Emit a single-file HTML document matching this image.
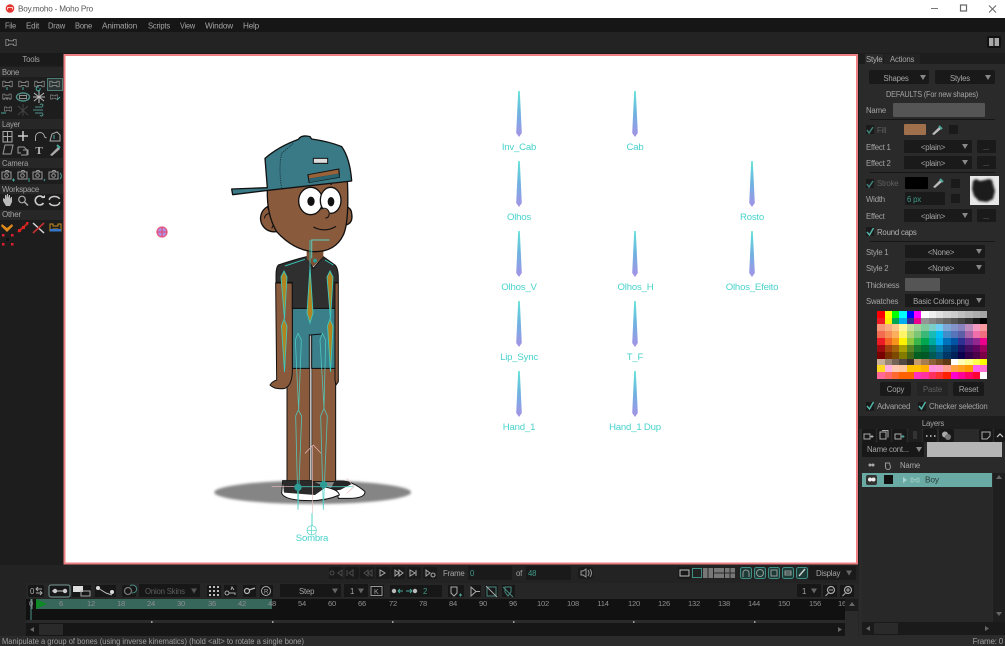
<!DOCTYPE html>
<html><head><meta charset="utf-8"><title>Boy.moho - Moho Pro</title>
<style>
html,body{margin:0;padding:0;width:1005px;height:646px;overflow:hidden;background:#262626}
svg{position:absolute;left:0;top:0}
text{font-family:"Liberation Sans",sans-serif;font-size:7.8px;letter-spacing:-.2px;fill:#a4a4a4}
.t{fill:#48d2cc;font-size:9.6px;text-anchor:middle}
.m{text-anchor:middle}
.g{fill:#5f5f5f}
.tl{fill:#3f9a88}
.r{fill:#8f8f8f;font-size:7.6px;text-anchor:middle}
.i{fill:none;stroke:#9a9a9a;stroke-width:1}
.c{fill:none;stroke:#52b5a8;stroke-width:1.5}
.tb{fill:none;stroke:#3f8f85;stroke-width:1}
#sw{position:absolute;left:877.3px;top:310.7px;width:110px;height:68.5px;display:grid;grid-template-columns:repeat(15,1fr);grid-template-rows:repeat(10,1fr)}
#sw i{display:block}
</style></head><body>
<svg width="1005" height="646" viewBox="0 0 1005 646" xmlns="http://www.w3.org/2000/svg">
<defs>
<linearGradient id="bn" x1="0" y1="0" x2="0" y2="1"><stop offset="0" stop-color="#62e2d8"/><stop offset=".45" stop-color="#6cb4e0"/><stop offset="1" stop-color="#a592e6"/></linearGradient>
<symbol id="bone" viewBox="0 0 10 50" overflow="visible"><path d="M4.200 0H5.800L7.800 42L5 46L2.200 42Z" fill="url(#bn)"/></symbol>
<symbol id="db" viewBox="0 0 14 10" overflow="visible"><path d="M1 1.500h3v1.500h6V1.500h3v7h-3V7H4v1.500H1Z" fill="none" stroke="#8f8f8f"/></symbol>
<filter id="bl"><feGaussianBlur stdDeviation="1"/></filter>
<filter id="bl2" x="-10%" y="-30%" width="120%" height="160%"><feGaussianBlur stdDeviation="4"/></filter>
</defs>

<!-- title bar -->
<rect width="1005" height="18" fill="#fff"/>
<circle cx="10" cy="8.500" r="4.300" fill="#e3342f"/><path d="M7.600 9.500v-2h4.800v2" fill="none" stroke="#fff" stroke-width=".8"/>
<text x="18" y="11.500" style="fill:#555;font-size:8.300px" textLength="75" lengthAdjust="spacingAndGlyphs">Boy.moho - Moho Pro</text>
<path d="M931 8.500h7" stroke="#777" fill="none"/><rect x="960.500" y="5" width="6" height="6" fill="none" stroke="#666" stroke-width="1.200"/><path d="M989 5.500l7 7M996 5.500l-7 7" stroke="#666" fill="none"/>

<!-- menu -->
<rect y="18" width="1005" height="14" fill="#161616"/>
<g style="font-size:8.400px"><text x="5" y="28.500" style="font-size:8.400px" textLength="11" lengthAdjust="spacingAndGlyphs">File</text><text x="26" y="28.500" style="font-size:8.400px" textLength="13" lengthAdjust="spacingAndGlyphs">Edit</text><text x="48" y="28.500" style="font-size:8.400px" textLength="17" lengthAdjust="spacingAndGlyphs">Draw</text><text x="75" y="28.500" style="font-size:8.400px" textLength="17" lengthAdjust="spacingAndGlyphs">Bone</text><text x="102" y="28.500" style="font-size:8.400px" textLength="35" lengthAdjust="spacingAndGlyphs">Animation</text><text x="148" y="28.500" style="font-size:8.400px" textLength="22" lengthAdjust="spacingAndGlyphs">Scripts</text><text x="180" y="28.500" style="font-size:8.400px" textLength="15" lengthAdjust="spacingAndGlyphs">View</text><text x="205" y="28.500" style="font-size:8.400px" textLength="28" lengthAdjust="spacingAndGlyphs">Window</text><text x="243" y="28.500" style="font-size:8.400px" textLength="16" lengthAdjust="spacingAndGlyphs">Help</text></g>

<!-- toolbar -->
<rect y="32" width="1005" height="21" fill="#232323"/>
<use href="#db" x="5" y="38" width="12" height="9"/>
<rect x="987" y="36" width="14" height="12" rx="2" fill="#111"/><path d="M989 38h4.400v8H989ZM994.600 38h4.400v8h-4.400Z" fill="#a8a8a8"/>

<!-- tool panel -->
<rect y="53" width="64" height="512" fill="#1d1d1d"/>
<rect y="53" width="63" height="12" fill="#1a1a1a"/><text x="31" y="62" class="m">Tools</text>
<g fill="#272727"><rect y="67" width="63" height="10"/><rect y="119" width="63" height="10"/><rect y="158" width="63" height="10"/><rect y="184" width="63" height="10"/><rect y="210" width="63" height="10"/></g>
<text x="2" y="75" style="font-size:8.400px" textLength="17" lengthAdjust="spacingAndGlyphs">Bone</text><text x="2" y="127" style="font-size:8.400px" textLength="18" lengthAdjust="spacingAndGlyphs">Layer</text><text x="2" y="166" style="font-size:8.400px" textLength="26" lengthAdjust="spacingAndGlyphs">Camera</text><text x="2" y="192" style="font-size:8.400px" textLength="37" lengthAdjust="spacingAndGlyphs">Workspace</text><text x="2" y="217" style="font-size:8.400px" textLength="19" lengthAdjust="spacingAndGlyphs">Other</text>
<rect x="47.500" y="78.500" width="15" height="12" fill="#2a3533" stroke="#4d7c74"/>
<g>
<use href="#db" x="2" y="80" width="11" height="8"/><use href="#db" x="18" y="80" width="11" height="8"/><use href="#db" x="34" y="80" width="11" height="8"/><use href="#db" x="49" y="80" width="11" height="8"/>
<path d="M7 87v3M23 87v3M39 87a2 2 0 1 0 1 1" stroke="#48a89c" fill="none"/>
<use href="#db" x="2" y="93" width="10" height="7"/><path d="M3 99h8" stroke="#999" stroke-dasharray="2 1"/>
<ellipse cx="23" cy="97" rx="6.500" ry="4" fill="none" stroke="#4d8f86" stroke-width="1.400"/><rect x="19.500" y="95.500" width="7" height="3" fill="none" stroke="#aaa" stroke-width=".8"/>
<path d="M39 91v12M34 93l10 8M44 93l-10 8M33 97h12" stroke="#bbb" fill="none"/>
<use href="#db" x="49" y="94" width="10" height="6"/><path d="M57 100l3-3" stroke="#48a89c" fill="none"/>
<use href="#db" x="3" y="106" width="10" height="6"/><path d="M1 113h5" stroke="#48a89c"/>
<path d="M18 106l10 9M28 106l-10 9M23 104v12" stroke="#444" fill="none"/>
<path d="M35 107h6a1.500 1.500 0 1 0-1-2M33 110h10M35 113h6a1.500 1.500 0 1 1-1 2" stroke="#4d8f86" fill="none"/>
</g>
<g class="i">
<path d="M3 131.500h9v10.500H3ZM7.500 131.500V142M3 136.500h9" stroke="#aaa"/><path d="M18 136h10M23 131v10" stroke="#ccc" stroke-width="1.500"/><path d="M35.500 141v-4a4.500 4.500 0 0 1 9 0l2 1" stroke="#aaa"/><path d="M50 141l2-7 5-2 3 3v6Z" stroke="#aaa"/><path d="M54 139v-4" stroke="#48a89c"/>
<path d="M3 154l2-9h8l-2 9Z"/><path d="M18 147h6l3 3v5h-6M18 147v6h3" /><path d="M23 150h5v5"/>
</g>
<text x="39" y="154" class="m" style="font-family:'Liberation Serif',serif;font-weight:bold;font-size:11px;fill:#bbb">T</text>
<path d="M50 155l8-8 2 2-8 7Z" fill="#aaa"/><path d="M57 145l3 3" stroke="#48a89c" stroke-width="2"/>
<g class="i">
<path d="M2 172h9v7H2ZM5 172l1-1.500h2l1 1.500"/><circle cx="6.500" cy="175.500" r="1.800"/><path d="M18 172h9v7h-9ZM21 172l1-1.500h2l1 1.500"/><circle cx="22.500" cy="175.500" r="1.800"/><path d="M33 172h9v7h-9ZM36 172l1-1.500h2l1 1.500"/><circle cx="37.500" cy="175.500" r="1.800"/><path d="M49 172h9v7h-9ZM52 172l1-1.500h2l1 1.500"/><circle cx="53.500" cy="175.500" r="1.800"/>
</g>
<path d="M12 180h3M13.500 178.500v3M29 178v4M44 181l1-2M60 173a4 4 0 0 1 0 6" stroke="#48a89c" fill="none"/>
<path d="M3 201v-3l2 1v-4h1v3l1-4h1v4l1-3h1v4l1-2h1v5l-2 4H6Z" fill="#bbb"/>
<circle cx="22" cy="199.500" r="3.300" fill="none" stroke="#aaa" stroke-width="1.200"/><path d="M24.500 202l3.500 3.500" stroke="#aaa" stroke-width="1.500"/>
<path d="M43.500 198a4.500 4.500 0 1 0 0 5" fill="none" stroke="#ccc" stroke-width="1.600"/><path d="M41 198h4v-3" fill="#ccc"/>
<path d="M49.500 200a5 3 0 0 1 10-1M59.500 202a5 3 0 0 1-10 1" fill="none" stroke="#ccc" stroke-width="1.500"/>
<path d="M2 224l5 4 5-4 1 2-6 6-6-6Z" fill="#e08a1c"/>
<path d="M18 232l10-9" stroke="#b03020" stroke-width="2"/><rect x="18" y="229" width="3" height="3" fill="#e02020"/><rect x="22" y="226" width="3" height="3" fill="#e02020"/><rect x="26" y="222" width="2.500" height="2.500" fill="#e02020"/>
<path d="M33 223l11 10" stroke="#d8d8d8" stroke-width="1.500"/><path d="M44 223l-11 10" stroke="#c03030" stroke-width="1.800"/>
<path d="M50 224h3v2h5v-2h3v7h-3v-2h-5v2h-3Z" fill="none" stroke="#c89020"/><rect x="50" y="229" width="11" height="2.500" fill="#3377cc"/>
<g fill="#e02030"><rect x="2" y="234" width="2.500" height="2.500"/><rect x="11" y="234" width="2.500" height="2.500"/><rect x="2" y="243" width="2.500" height="2.500"/><rect x="11" y="243" width="2.500" height="2.500"/></g><rect x="6" y="238" width="3" height="3" fill="#111"/>

<!-- canvas -->
<rect x="63" y="53" width="796" height="512" fill="#1c1c1c"/>
<rect x="64.500" y="55" width="792.500" height="508.500" fill="#fff" stroke="#ee7f83" stroke-width="2"/>

<!-- layer origin -->
<circle cx="162" cy="232" r="5" fill="#b090e0" stroke="#e85a80" stroke-width="1.300"/><path d="M157 232h10M162 227v10" stroke="#e8406a" stroke-width="1"/>

<!-- bones -->
<use href="#bone" x="514" y="91" width="10" height="50"/><use href="#bone" x="630" y="91" width="10" height="50"/>
<use href="#bone" x="514" y="161" width="10" height="50"/><use href="#bone" x="747" y="161" width="10" height="50"/>
<use href="#bone" x="514" y="231" width="10" height="50"/><use href="#bone" x="630" y="231" width="10" height="50"/><use href="#bone" x="747" y="231" width="10" height="50"/>
<use href="#bone" x="514" y="301" width="10" height="50"/><use href="#bone" x="630" y="301" width="10" height="50"/>
<use href="#bone" x="514" y="371" width="10" height="50"/><use href="#bone" x="630" y="371" width="10" height="50"/>
<text class="t" x="519" y="150">Inv_Cab</text><text class="t" x="635" y="150">Cab</text><text class="t" x="519" y="220">Olhos</text><text class="t" x="752" y="220">Rosto</text><text class="t" x="519" y="290">Olhos_V</text><text class="t" x="635.500" y="290">Olhos_H</text><text class="t" x="752" y="290">Olhos_Efeito</text><text class="t" x="519" y="360">Lip_Sync</text><text class="t" x="635" y="360">T_F</text><text class="t" x="519" y="430">Hand_1</text><text class="t" x="635" y="430">Hand_1 Dup</text><text class="t" x="312" y="541">Sombra</text>

<!-- character lower -->
<g transform="translate(210 290) scale(.33333)">
<ellipse cx="308" cy="607" rx="295" ry="35" fill="#858585" filter="url(#bl2)"/>
<path d="M231 235H300V575H231Z" fill="#8a5a3c" stroke="#111" stroke-width="3"/>
<path d="M305 235H377V575H305Z" fill="#8a5a3c" stroke="#111" stroke-width="3"/>
<path d="M300 135h5v435h-5z" fill="#bbb"/>
<path d="M247 55H375V235H305V135H298V235H247Z" fill="#3b7f8a" stroke="#111" stroke-width="3"/>
<path d="M300 135l35-3" stroke="#111" stroke-width="3" fill="none"/>
<path d="M197 -21H247V235Q248 285 225 295Q195 300 180 285Q185 275 200 270Z" fill="#8a5a3c" stroke="#111" stroke-width="3"/>
<path d="M375 -21H385V275L378 285L375 270Z" fill="#8a5a3c" stroke="#111" stroke-width="3"/>
<path d="M375 575Q420 565 465 605Q465 625 420 625H385Z" fill="#fff" stroke="#111" stroke-width="3"/>
<path d="M375 572Q405 568 425 582L390 600H360Z" fill="#262626"/>
<path d="M218 572H300L340 590Q385 598 388 615Q350 632 300 632Q225 632 215 610Z" fill="#fff" stroke="#111" stroke-width="3"/>
<path d="M218 572H300L350 590L315 615L222 608Z" fill="#2a2a2a"/>
<g fill="none" stroke="#4ed2c6" stroke-width="2.500" opacity=".85">
<path d="M264 130L274 150L266 360L256 150Z"/><path d="M265 360L275 378L264 660L257 378Z"/>
<path d="M337 130L347 150L342 355L330 150Z"/><path d="M342 355L352 378L340 660L332 378Z"/>
<path d="M265 590H430"/>
</g>
<path d="M185 589H265M308 470V670M285 490L310 465L333 490M410 565l22 25l-22 20" fill="none" stroke="#e9bfc0" stroke-width="2"/>
<circle cx="264" cy="592" r="11" fill="#2e9c96"/><circle cx="341" cy="584" r="11" fill="#2e9c96"/>
<path d="M306 670v38" stroke="#4ed2c6" stroke-width="3"/><circle cx="305" cy="721" r="14" fill="none" stroke="#4ed2c6" stroke-width="2"/><path d="M291 721h28M305 707v28" stroke="#4ed2c6" stroke-width="2"/>
</g>

<!-- character upper -->
<g transform="translate(210 125) scale(.33333)">
<path d="M205 420Q250 405 290 395L310 430L340 395L375 420Q385 430 385 460V472H375V550H247V472H198V450Q198 428 205 420Z" fill="#2f2f2f" stroke="#111" stroke-width="3"/>
<path d="M290 360v40l20 25 30-30v-35Z" fill="#7d4f33"/>
<path d="M172 245a38 38 0 1 0 40 70Z" fill="#8a5a3c" stroke="#111" stroke-width="4"/>
<path d="M163 280q5-20 25-12M185 310q10-15 0-25q10 3 17 12" fill="none" stroke="#111" stroke-width="3"/>
<path d="M410 245a24 24 0 0 1 15 20q5 30-18 35Z" fill="#8a5a3c" stroke="#111" stroke-width="4"/>
<path d="M172 195Q170 270 200 320Q250 375 310 380Q375 382 400 330Q418 290 412 165Z" fill="#8a5a3c" stroke="#111" stroke-width="4"/>
<ellipse cx="302" cy="228" rx="36" ry="41" fill="#fff" stroke="#111" stroke-width="4"/>
<ellipse cx="362" cy="226" rx="31" ry="39" fill="#fff" stroke="#111" stroke-width="4"/>
<ellipse cx="303" cy="229" rx="11" ry="14" fill="#111"/><ellipse cx="363" cy="230" rx="10" ry="14" fill="#111"/>
<path d="M332 268q-5-20 20-15q15 10 3 28q-15 8-23-13Z" fill="#8a5a3c"/><path d="M332 252q22-8 26 14q-2 14-12 13" fill="none" stroke="#111" stroke-width="3"/>
<path d="M310 306q35 18 68-2" fill="none" stroke="#111" stroke-width="3.500"/>
<path d="M280 180q15-18 30 -5M330 170q20-5 35 10" fill="none" stroke="#111" stroke-width="3"/>
<path d="M65 192L172 188L165 100Q205 65 265 43Q275 28 300 35L305 42Q360 50 395 65Q420 100 425 168L175 196L68 209Z" fill="#3a7a87" stroke="#111" stroke-width="4" stroke-linejoin="round"/>
<path d="M215 190Q205 130 215 85L250 55" fill="none" stroke="#1a3d46" stroke-width="3" stroke-dasharray="4 3"/>
<rect x="310" y="100" width="43" height="15" fill="#ddd" stroke="#111" stroke-width="3"/>
<path d="M292 148L388 130L390 158L296 174Z" fill="#111"/><path d="M296 150L385 134L386 146L297 161Z" fill="#9a6238"/><path d="M297 161L386 146L388 156L299 172Z" fill="#2a6470"/>
<path d="M225 423L285 403M345 405L370 420" stroke="#35c2b5" stroke-width="3" fill="none"/>
<circle cx="315" cy="407" r="6" fill="#2e9c96"/>
<path d="M358 345H305V400" stroke="#5ad2c6" stroke-width="3.500" fill="none" opacity=".8"/>
</g>
<!-- torso bones -->
<path d="M310 240V268" stroke="#3cc8bb" stroke-width="1.200" opacity=".7"/>
<g stroke="#3cc8bb" stroke-width=".9">
<path d="M284 271L287 277L284.500 319L281 277Z" fill="#b28420"/><path d="M310 267L313 313L310 323L307 313Z" fill="#b28420"/><path d="M330 271L333 277L330.500 319L327 277Z" fill="#b28420"/>
<path d="M284 319L287 326L284.500 372L281.500 326Z" fill="#b28420"/><path d="M330 319L333 326L330.500 372L327.500 326Z" fill="#b28420"/>
</g>

<!-- control bar -->
<rect x="0" y="565" width="860" height="18" fill="#232323"/>
<g fill="#1a1a1a"><rect x="329" y="567" width="14" height="12" rx="2"/><rect x="345" y="567" width="14" height="12" rx="2"/><rect x="360" y="567" width="14" height="12" rx="2"/><rect x="376" y="567" width="14" height="12" rx="2"/><rect x="391" y="567" width="14" height="12" rx="2"/><rect x="407" y="567" width="14" height="12" rx="2"/><rect x="423" y="567" width="14" height="12" rx="2"/><rect x="468" y="566" width="44" height="14"/><rect x="526" y="566" width="45" height="14"/><rect x="578" y="567" width="15" height="12" rx="3"/><rect x="678" y="567" width="13" height="12" rx="2"/><rect x="809" y="566" width="47" height="14" rx="2"/></g>
<g fill="none" stroke="#4c4c4c"><path d="M342 570l-4 3 4 3zM330 573a2 2 0 1 0 4 0a2 2 0 1 0-4 0M347 570v6M353 570l-4 3 4 3zM368 570l-4 3 4 3zM372 570l-4 3 4 3z"/></g>
<g fill="none" stroke="#a8a8a8"><path d="M380 570l5 3-5 3zM395 570l4 3-4 3zM399 570l4 3-4 3zM410 570l5 3-5 3zM416 570v6M426 570l4 3-4 3zM433 573a2 2 0 1 0 .1 0"/></g>
<path d="M581 571h2l3-2v8l-3-2h-2zM588 570q2 3 0 6M590 569q3 4 0 8" fill="none" stroke="#999"/>
<text x="443" y="576">Frame</text><text x="470" y="576" class="tl">0</text><text x="516" y="576">of</text><text x="528" y="576" class="tl">48</text>
<rect x="680" y="570" width="9" height="6" fill="none" stroke="#bbb"/>
<rect x="692.500" y="568.500" width="9" height="9" fill="#222" stroke="#3f8f85"/><path d="M703 568h10v10h-10zM714 568h10v10h-10zM725 568h10v10h-10z" fill="#777"/>
<path d="M708 568v10M714 573h10M730 568v10M725 573h10" stroke="#2a2a2a"/>
<g class="tb"><rect x="740.500" y="567.500" width="11" height="11" rx="2" fill="#1c3a36"/><rect x="754.500" y="567.500" width="11" height="11" rx="2" fill="#1c3a36"/><rect x="768.500" y="567.500" width="11" height="11" rx="2" fill="#1c3a36"/><rect x="782.500" y="567.500" width="11" height="11" rx="2" fill="#1c3a36"/><rect x="796.500" y="567.500" width="11" height="11" rx="2" fill="#1c3a36"/></g>
<g fill="none" stroke="#999"><path d="M743 577v-4a3 3 0 0 1 6 0v4"/><circle cx="760" cy="573" r="3.500"/><rect x="771" y="570" width="6" height="6"/><path d="M785 571h6v4h-6zM785 573h6"/><path d="M799 576l6-7" stroke="#ccc" stroke-width="1.500"/></g>
<text x="816" y="576">Display</text><path d="M846 570.500h6l-3 5z" fill="#666"/>

<!-- timeline controls -->
<rect x="0" y="583" width="26" height="53" fill="#232323"/>
<rect x="26" y="583" width="832" height="16" fill="#262626"/>
<g fill="#171717"><rect x="28" y="585" width="16" height="12" rx="2"/><rect x="49" y="585" width="21" height="12" rx="2" stroke="#7a9a94"/><rect x="72" y="585" width="19" height="12"/><rect x="95" y="585" width="21" height="12"/><rect x="122" y="585" width="14" height="12" rx="2"/><rect x="139" y="584" width="61" height="13"/><rect x="207" y="585" width="14" height="12"/><rect x="224" y="585" width="13" height="12"/><rect x="243" y="585" width="13" height="12"/><rect x="260" y="585" width="13" height="12"/><rect x="280" y="584" width="61" height="13"/><rect x="344" y="584" width="24" height="13"/><rect x="370" y="585" width="14" height="12"/><rect x="390" y="585" width="31" height="12"/><rect x="421" y="585" width="21" height="12"/><rect x="448" y="585" width="16" height="12"/><rect x="470" y="585" width="11" height="12"/><rect x="485" y="585" width="13" height="12"/><rect x="502" y="585" width="13" height="12"/><rect x="797" y="584" width="24" height="13"/><rect x="823" y="585" width="14" height="12"/><rect x="840" y="585" width="14" height="12"/></g>
<text x="30" y="594" style="fill:#b0b0b0">0</text><path d="M36 589h6M38 587l-2 2 2 2M36 593h6M40 591l2 2-2 2" stroke="#aaa" fill="none"/>
<path d="M52 591h15" stroke="#ccc"/><circle cx="55" cy="591" r="2.200" fill="#ccc"/><circle cx="65" cy="591" r="2.200" fill="#ccc"/>
<rect x="73" y="586" width="10" height="6" fill="#ddd"/><rect x="81" y="591" width="9" height="5" fill="none" stroke="#aaa"/>
<path d="M98 588l8 5 6 2" stroke="#bbb" fill="none"/><circle cx="98" cy="588" r="2" fill="#ddd"/><circle cx="112" cy="592" r="2" fill="#ddd"/>
<circle cx="128" cy="591" r="3.500" fill="none" stroke="#777" stroke-width="1.300"/><path d="M130 586a4 4 0 1 1 2 7" fill="none" stroke="#4a8a80"/>
<text x="145" y="594" class="g">Onion Skins</text><path d="M191 588.500h6l-3 5z" fill="#555"/>
<g fill="#bbb"><rect x="209" y="586" width="2" height="2"/><rect x="213" y="586" width="2" height="2"/><rect x="217" y="586" width="2" height="2"/><rect x="209" y="590" width="2" height="2"/><rect x="213" y="590" width="2" height="2"/><rect x="217" y="590" width="2" height="2"/><rect x="209" y="594" width="2" height="2"/><rect x="213" y="594" width="2" height="2"/><rect x="217" y="594" width="2" height="2"/></g>
<circle cx="227" cy="593" r="2" fill="none" stroke="#aaa"/><path d="M229 593h6v2M231 590l1-3 2 3" fill="none" stroke="#aaa"/>
<circle cx="247" cy="591" r="2.500" fill="none" stroke="#bbb" stroke-width="1.200"/><path d="M249 590l6-2" stroke="#bbb" stroke-width="1.200"/>
<circle cx="266" cy="591" r="4.500" fill="none" stroke="#aaa"/><text x="264" y="593.500" style="font-size:6px;fill:#aaa">R</text>
<text x="299" y="594">Step</text><path d="M332 588.500h6l-3 5z" fill="#666"/>
<text x="350" y="594">1</text><path d="M358 588.500h6l-3 5z" fill="#666"/>
<rect x="371" y="586.500" width="11" height="9" fill="none" stroke="#999"/><text x="374" y="594" style="font-size:7px">K</text>
<circle cx="394" cy="591" r="2.200" fill="#bbb"/><path d="M398 591h5M398 591l2-2M398 591l2 2" stroke="#48a89c" fill="none"/><circle cx="415" cy="591" r="2.200" fill="#bbb"/><path d="M406 591h6M412 591l-2-2M412 591l-2 2" stroke="#48a89c" fill="none"/>
<text x="423" y="594" class="tl">2</text>
<path d="M451 587h6v6l-3 3-3-3Z" fill="none" stroke="#aaa"/><path d="M459 595h3M460.500 593.500v3" stroke="#48a89c"/>
<path d="M471 587v9l5-4.500ZM476 591.500h4" fill="none" stroke="#aaa"/><rect x="487" y="587" width="9" height="9" fill="none" stroke="#4a8a80"/><path d="M486 586l11 11" stroke="#aaa"/>
<path d="M505 587h6v5l-3 4-3-4ZM503 587l10 10" fill="none" stroke="#4a8a80"/>
<text x="802" y="594">1</text><path d="M811 588.500h6l-3 5z" fill="#666"/>
<circle cx="831" cy="590" r="3.500" fill="none" stroke="#aaa" stroke-width="1.200"/><path d="M829 590h4M828.500 593l-3 3" stroke="#aaa"/>
<circle cx="848" cy="590" r="3.500" fill="none" stroke="#aaa" stroke-width="1.200"/><path d="M846 590h4M848 588v4M845.500 593l-3 3" stroke="#aaa"/>

<!-- timeline -->
<rect x="26" y="599" width="819" height="21" fill="#111"/>
<rect x="36" y="599" width="236" height="10" fill="#37665a"/>
<path d="M36 599v10l11-5Z" fill="#0d8a25"/>
<path d="M30.500 599h2v10h-2z" fill="#6a8a85"/><path d="M31 609v14" stroke="#4c9488"/>
<rect x="26" y="620" width="819" height="3" fill="#2a2a2a"/>
<text x="31" y="606" class="r">0</text><text x="61" y="606" class="r">6</text><text x="91" y="606" class="r">12</text><text x="121" y="606" class="r">18</text><text x="151" y="606" class="r">24</text><text x="181" y="606" class="r">30</text><text x="212" y="606" class="r">36</text><text x="242" y="606" class="r">42</text><text x="272" y="606" class="r">48</text><text x="302" y="606" class="r">54</text><text x="332" y="606" class="r">60</text><text x="362" y="606" class="r">66</text><text x="393" y="606" class="r">72</text><text x="423" y="606" class="r">78</text><text x="453" y="606" class="r">84</text><text x="483" y="606" class="r">90</text><text x="513" y="606" class="r">96</text><text x="543" y="606" class="r">102</text><text x="573" y="606" class="r">108</text><text x="603" y="606" class="r">114</text><text x="634" y="606" class="r">120</text><text x="664" y="606" class="r">126</text><text x="694" y="606" class="r">132</text><text x="724" y="606" class="r">138</text><text x="754" y="606" class="r">144</text><text x="784" y="606" class="r">150</text><text x="815" y="606" class="r">156</text><text x="842" y="606" class="r">16</text>
<g fill="#999"><rect x="151" y="621" width="1.500" height="2"/><rect x="272" y="621" width="1.500" height="2"/><rect x="392" y="621" width="1.500" height="2"/><rect x="513" y="621" width="1.500" height="2"/><rect x="633" y="621" width="1.500" height="2"/><rect x="754" y="621" width="1.500" height="2"/></g>
<rect x="26" y="623" width="819" height="13" fill="#161616"/><rect x="39" y="624" width="24" height="11" fill="#2a2a2a"/>
<path d="M34 627v5l-4-2.500zM838 627v5l4-2.500z" fill="#666"/>
<rect x="845" y="599" width="13" height="37" fill="#1b1b1b"/><rect x="845" y="611" width="13" height="25" fill="#2b2b2b"/><path d="M849 606l3-4 3 4z" fill="#666"/>

<!-- status -->
<rect y="636" width="1005" height="10" fill="#2b2b2b"/>
<text x="2" y="644" style="font-size:8px;letter-spacing:0;fill:#a0a0a0" textLength="302" lengthAdjust="spacingAndGlyphs">Manipulate a group of bones (using inverse kinematics) (hold &lt;alt&gt; to rotate a single bone)</text>
<text x="1003" y="644" style="font-size:8px;fill:#a0a0a0;text-anchor:end">Frame: 0</text>

<!-- right panel -->
<rect x="859" y="53" width="146" height="583" fill="#2a2a2a"/>
<rect x="859" y="53" width="146" height="11" fill="#1d1d1d"/>
<rect x="865" y="54" width="18" height="11" fill="#2a2a2a"/><rect x="884" y="54" width="36" height="10" fill="#232323"/>
<text x="866" y="62" style="fill:#b0b0b0">Style</text><text x="890" y="62">Actions</text>
<g fill="#191919"><rect x="869" y="70" width="60" height="14" rx="2"/><rect x="935" y="70" width="60" height="14" rx="2"/></g>
<text x="896" y="81" class="m">Shapes</text><text x="960" y="81" class="m">Styles</text><path d="M920 75h6l-3 5zM985 75h6l-3 5z" fill="#888"/>
<text x="886" y="97" style="font-size:8.400px" textLength="92" lengthAdjust="spacingAndGlyphs">DEFAULTS (For new shapes)</text>
<text x="866" y="113">Name</text><rect x="893" y="103" width="92" height="14" rx="1" fill="#555"/>
<g stroke="#161616"><path d="M870 119.500h125M870 172.500h125M870 241.500h125"/></g>
<g fill="#1a1a1a"><rect x="866" y="125" width="8" height="9"/><rect x="949" y="125" width="9" height="9"/><rect x="904" y="140" width="68" height="13" rx="1"/><rect x="977" y="140" width="19" height="13" rx="1"/><rect x="904" y="156" width="68" height="13" rx="1"/><rect x="977" y="156" width="19" height="13" rx="1"/><rect x="866" y="179" width="8" height="9"/><rect x="905" y="192" width="40" height="13" rx="1"/><rect x="951" y="179" width="9" height="9"/><rect x="951" y="194" width="9" height="9"/><rect x="904" y="209" width="68" height="13" rx="1"/><rect x="977" y="209" width="19" height="13" rx="1"/><rect x="866" y="227" width="8" height="9"/><rect x="905" y="245" width="80" height="13" rx="1"/><rect x="905" y="261" width="80" height="13" rx="1"/><rect x="905" y="294" width="80" height="13" rx="1"/></g>
<path d="M867 130l2 3 4-6M867 184l2 3 4-6" class="c" stroke-width="1.200" style="stroke:#3f8078"/><path d="M867 232l2.500 3 4-7" class="c"/>
<text x="877" y="133" class="g">Fill</text><text x="877" y="186" class="g">Stroke</text>
<rect x="904" y="124" width="22" height="11" rx="1" fill="#a0704c"/><rect x="905" y="177" width="23" height="12" rx="1" fill="#000"/>
<path d="M932 134l7-7 2 2-7 6zM933 187l7-7 2 2-7 6z" fill="#bbb"/><path d="M939 126l3 3M940 179l3 3" stroke="#48a89c" stroke-width="2"/>
<text x="866" y="150">Effect 1</text><text x="866" y="166">Effect 2</text><text x="866" y="202">Width</text><text x="866" y="219">Effect</text>
<text x="933" y="150" class="m">&lt;plain&gt;</text><text x="933" y="166" class="m">&lt;plain&gt;</text><text x="933" y="219" class="m">&lt;plain&gt;</text>
<text x="986" y="150" class="m" style="fill:#777">...</text><text x="986" y="166" class="m" style="fill:#777">...</text><text x="986" y="219" class="m" style="fill:#777">...</text>
<path d="M962 144h6l-3 5zM962 160h6l-3 5zM962 213h6l-3 5zM976 249h6l-3 5zM976 265h6l-3 5zM976 298h6l-3 5z" fill="#888"/>
<text x="907" y="202" class="tl">6 px</text>
<rect x="970" y="176" width="29" height="29" fill="#e8e8e8"/><path d="M973 181l3-2 4 2 5-1 4-1 3 1 1 4 2 7-2 8-6 3-8-1-5-5-2-7Z" fill="#1c1c1c" filter="url(#bl)"/>
<text x="877" y="235" style="fill:#b0b0b0">Round caps</text>
<text x="866" y="255">Style 1</text><text x="866" y="271">Style 2</text><text x="866" y="288">Thickness</text><text x="866" y="304">Swatches</text>
<text x="941" y="255" class="m">&lt;None&gt;</text><text x="941" y="271" class="m">&lt;None&gt;</text><text x="941" y="304" class="m">Basic Colors.png</text>
<rect x="905" y="278" width="35" height="13" rx="1" fill="#555"/>
<g fill="#191919"><rect x="880" y="382" width="31" height="14" rx="2"/><rect x="917" y="382" width="31" height="14" rx="2" fill="#242424"/><rect x="953" y="382" width="31" height="14" rx="2"/><rect x="866" y="402" width="8" height="9"/><rect x="918" y="402" width="8" height="9"/></g>
<text x="895.500" y="392" class="m">Copy</text><text x="932.500" y="392" class="m g">Paste</text><text x="968.500" y="392" class="m">Reset</text>
<path d="M867 406l2.500 3 4-7M919 406l2.500 3 4-7" class="c"/>
<text x="877" y="409">Advanced</text><text x="929" y="409">Checker selection</text>

<!-- layers -->
<rect x="859" y="416" width="146" height="13" fill="#1d1d1d"/><text x="933" y="426" class="m">Layers</text>
<rect x="859" y="429" width="146" height="207" fill="#2a2a2a"/>
<g fill="#181818"><rect x="862" y="429" width="14" height="13" rx="2"/><rect x="877" y="429" width="14" height="13" rx="2"/><rect x="892" y="429" width="15" height="13" rx="2"/><rect x="908" y="429" width="14" height="13" rx="2" opacity=".6"/><rect x="923" y="429" width="14" height="13" rx="2"/><rect x="939" y="429" width="15" height="13" rx="2"/><rect x="979" y="429" width="14" height="13" rx="2"/><rect x="994" y="429" width="11" height="13" rx="2"/><rect x="862" y="442" width="62" height="15" rx="1"/></g>
<path d="M864 439v-5h6v5zM872 435v3M870.500 436.500h3" fill="none" stroke="#aaa"/><path d="M880 432h6v7h-6zM882 430.500h6v7" fill="none" stroke="#aaa"/><path d="M895 439v-5h6v5z" fill="none" stroke="#aaa"/><path d="M903 435v3M901.500 436.500h3" stroke="#48a89c" fill="none"/>
<path d="M913 431h4v8h-4z" fill="#333"/><path d="M926 436h1.500M930 436h1.500M934 436h1.500" stroke="#ccc" stroke-width="1.500"/><circle cx="945" cy="434.500" r="3" fill="#aaa"/><circle cx="948" cy="437" r="3" fill="#777"/>
<path d="M982 432h8v4l-3 3h-5z" fill="none" stroke="#aaa"/><path d="M997 437l3-3 3 3" fill="none" stroke="#ccc" stroke-width="1.200"/>
<text x="867" y="452">Name cont...</text><path d="M916 447h6l-3 5z" fill="#888"/>
<rect x="927" y="442" width="75" height="15" fill="#b5b5b5"/>
<circle cx="870" cy="465" r="1.500" fill="#aaa"/><circle cx="873" cy="465" r="1.500" fill="#aaa"/><path d="M885.500 463h4l1 4a2.500 2.500 0 1 1-5 0z" fill="none" stroke="#999"/>
<text x="900" y="468" style="fill:#a8a8a8">Name</text>
<rect x="862" y="473" width="130" height="14" fill="#69aba4"/>
<rect x="866" y="475" width="11" height="10" rx="2" fill="#333"/><circle cx="870" cy="479.500" r="2" fill="#eee"/><circle cx="873.500" cy="479.500" r="2" fill="#eee"/>
<rect x="884" y="475" width="9" height="9" fill="#111"/>
<path d="M903 477l4 3-4 3z" fill="#a8d2cd"/><path d="M911 478h2v1.500h4V478h2v4h-2v-1h-4v1h-2Z" fill="none" stroke="#a0cfc8" stroke-width=".8"/>
<text x="925" y="482.500" style="fill:#2c3c3a;font-size:8.400px">Boy</text>
<rect x="993" y="473" width="12" height="149" fill="#1f1f1f"/><path d="M996 479l3-4 3 4zM996 612l3 4 3-4z" fill="#666"/>
<rect x="862" y="487" width="130" height="135" fill="#282828"/>
<rect x="862" y="622" width="143" height="13" fill="#1a1a1a"/><rect x="874" y="623" width="24" height="11" fill="#2a2a2a"/>
<path d="M870 626v5l-4-2.500zM985 626v5l4-2.500z" fill="#666"/>
</svg>
<div id="sw"><i style="background:#f00"></i><i style="background:#ff0"></i><i style="background:#0f0"></i><i style="background:#0ff"></i><i style="background:#00f"></i><i style="background:#f0f"></i><i style="background:#fff"></i><i style="background:#eee"></i><i style="background:#e0e0e0"></i><i style="background:#d4d4d4"></i><i style="background:#ccc"></i><i style="background:#c0c0c0"></i><i style="background:#b6b6b6"></i><i style="background:#adadad"></i><i style="background:#a5a5a5"></i>
<i style="background:#ed1c24"></i><i style="background:#fff200"></i><i style="background:#00a651"></i><i style="background:#00aeef"></i><i style="background:#2e3192"></i><i style="background:#ec008c"></i><i style="background:#959595"></i><i style="background:#858585"></i><i style="background:#767676"></i><i style="background:#666"></i><i style="background:#555"></i><i style="background:#444"></i><i style="background:#333"></i><i style="background:#1a1a1a"></i><i style="background:#000"></i>
<i style="background:#f7977a"></i><i style="background:#f9ad81"></i><i style="background:#fdc68a"></i><i style="background:#fff79a"></i><i style="background:#c4df9b"></i><i style="background:#a2d39c"></i><i style="background:#82ca9d"></i><i style="background:#7bcdc8"></i><i style="background:#6ecff6"></i><i style="background:#7ea7d8"></i><i style="background:#8493ca"></i><i style="background:#8882be"></i><i style="background:#bc8dbf"></i><i style="background:#f49ac2"></i><i style="background:#f6989d"></i>
<i style="background:#f26c4f"></i><i style="background:#f68e55"></i><i style="background:#fbaf5c"></i><i style="background:#fff467"></i><i style="background:#acd372"></i><i style="background:#7cc576"></i><i style="background:#3bb878"></i><i style="background:#1abbb4"></i><i style="background:#00bff3"></i><i style="background:#438cca"></i><i style="background:#5574b9"></i><i style="background:#5c5fa8"></i><i style="background:#a864a8"></i><i style="background:#f06eaa"></i><i style="background:#f26d7d"></i>
<i style="background:#ed1c24"></i><i style="background:#f26522"></i><i style="background:#f7941d"></i><i style="background:#fff200"></i><i style="background:#8dc73f"></i><i style="background:#39b54a"></i><i style="background:#00a650"></i><i style="background:#00a99d"></i><i style="background:#00aeef"></i><i style="background:#0072bc"></i><i style="background:#0054a6"></i><i style="background:#2e3192"></i><i style="background:#662d91"></i><i style="background:#92278f"></i><i style="background:#ec008c"></i>
<i style="background:#9e0b0f"></i><i style="background:#a0410d"></i><i style="background:#a36209"></i><i style="background:#aba000"></i><i style="background:#598527"></i><i style="background:#1a7b30"></i><i style="background:#007236"></i><i style="background:#00746b"></i><i style="background:#0076a3"></i><i style="background:#004b80"></i><i style="background:#003471"></i><i style="background:#1b1464"></i><i style="background:#440e62"></i><i style="background:#630460"></i><i style="background:#9e005d"></i>
<i style="background:#790000"></i><i style="background:#7b2e00"></i><i style="background:#7d4900"></i><i style="background:#827b00"></i><i style="background:#406618"></i><i style="background:#005e20"></i><i style="background:#005826"></i><i style="background:#005952"></i><i style="background:#005b7f"></i><i style="background:#003663"></i><i style="background:#002157"></i><i style="background:#0d004c"></i><i style="background:#32004b"></i><i style="background:#4b0049"></i><i style="background:#7b0046"></i>
<i style="background:#c7b299"></i><i style="background:#998675"></i><i style="background:#736357"></i><i style="background:#534741"></i><i style="background:#37302a"></i><i style="background:#c69c6d"></i><i style="background:#a67c52"></i><i style="background:#8c6239"></i><i style="background:#754c24"></i><i style="background:#603813"></i><i style="background:#fff"></i><i style="background:#ffffb8"></i><i style="background:#ffff90"></i><i style="background:#ffff50"></i><i style="background:#ff0"></i>
<i style="background:#ffd820"></i><i style="background:#ffb0e0"></i><i style="background:#ffc8b0"></i><i style="background:#ffc8a0"></i><i style="background:#ffc000"></i><i style="background:#ffc000"></i><i style="background:#ffb000"></i><i style="background:#ff90e0"></i><i style="background:#ff98d0"></i><i style="background:#ffa090"></i><i style="background:#ffa040"></i><i style="background:#ffa020"></i><i style="background:#ff9800"></i><i style="background:#ff60f0"></i><i style="background:#ff70d0"></i>
<i style="background:#ff6898"></i><i style="background:#ff6868"></i><i style="background:#ff6830"></i><i style="background:#ff6000"></i><i style="background:#ff6000"></i><i style="background:#ff30c0"></i><i style="background:#ff30a0"></i><i style="background:#ff3060"></i><i style="background:#ff3030"></i><i style="background:#ff2000"></i><i style="background:#f0c"></i><i style="background:#f09"></i><i style="background:#f06"></i><i style="background:#f03"></i><i style="background:#fff"></i></div>
</body></html>
